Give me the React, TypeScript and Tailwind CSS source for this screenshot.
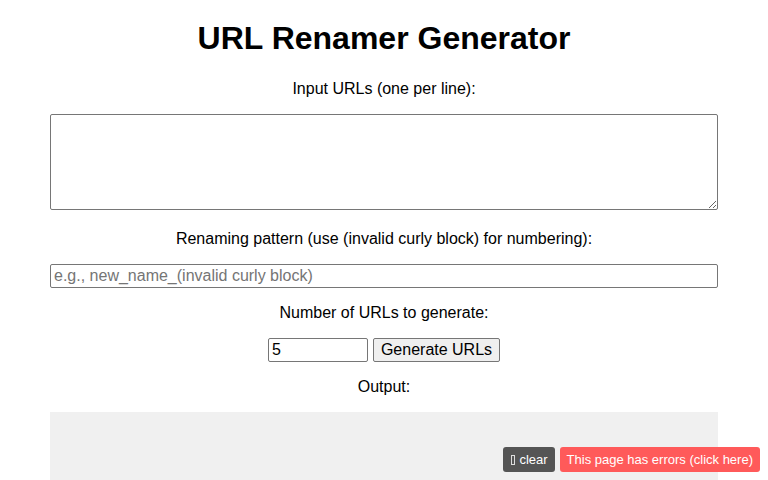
import React from "react";

export default function App() {
  return (
    <div className="min-h-[480px] bg-white text-black px-[50px] text-center relative overflow-hidden" style={{ fontFamily: '"Liberation Sans", Arial, sans-serif' }}>
      <h1 className="text-[32px] leading-[37px] font-bold pt-[20px] m-0">URL Renamer Generator</h1>
      <div className="mt-[23px] text-[16px] leading-[18px]">Input URLs (one per line):</div>
      <textarea className="block mt-[16px] w-full h-[96px] border border-[#767676] rounded-[2px] bg-white resize-y" />
      <div className="mt-[20px] text-[16px] leading-[18px]">Renaming pattern (use (invalid curly block) for numbering):</div>
      <input
        className="block mt-[16px] w-full h-[24px] border border-[#767676] rounded-[2px] px-[3px] text-[16px] placeholder:text-[#757575] outline-none"
        placeholder="e.g., new_name_(invalid curly block)"
      />
      <div className="mt-[16px] text-[16px] leading-[18px]">Number of URLs to generate:</div>
      <div className="mt-[16px] flex justify-center items-center h-[24px]">
        <input
          className="w-[100px] h-[24px] border border-[#767676] rounded-[2px] px-[3px] text-[16px] text-left outline-none"
          defaultValue="5"
        />
        <button className="ml-[5px] h-[24px] px-[7px] text-[16px] leading-[18px] bg-[#efefef] border border-[#767676] rounded-[2px]">Generate URLs</button>
      </div>
      <div className="mt-[16px] text-[16px] leading-[18px]">Output:</div>
      <div className="mt-[16px] w-full h-[120px] bg-[#f0f0f0]" />
      <div className="absolute right-[8px] top-[447px] flex gap-[5px] text-[13px]" style={{ fontFamily: '"Liberation Sans", Arial, sans-serif' }}>
        <div className="h-[25px] pl-[8px] pr-[7px] flex items-center gap-[4px] bg-[#555555] text-white rounded-[3px]">
          <span className="inline-block w-[4px] h-[10px] border border-white/80" />
          <span>clear</span>
        </div>
        <div className="h-[25px] px-[7px] flex items-center bg-[#ff5a5a] text-white rounded-[3px]">This page has errors (click here)</div>
      </div>
    </div>
  );
}
